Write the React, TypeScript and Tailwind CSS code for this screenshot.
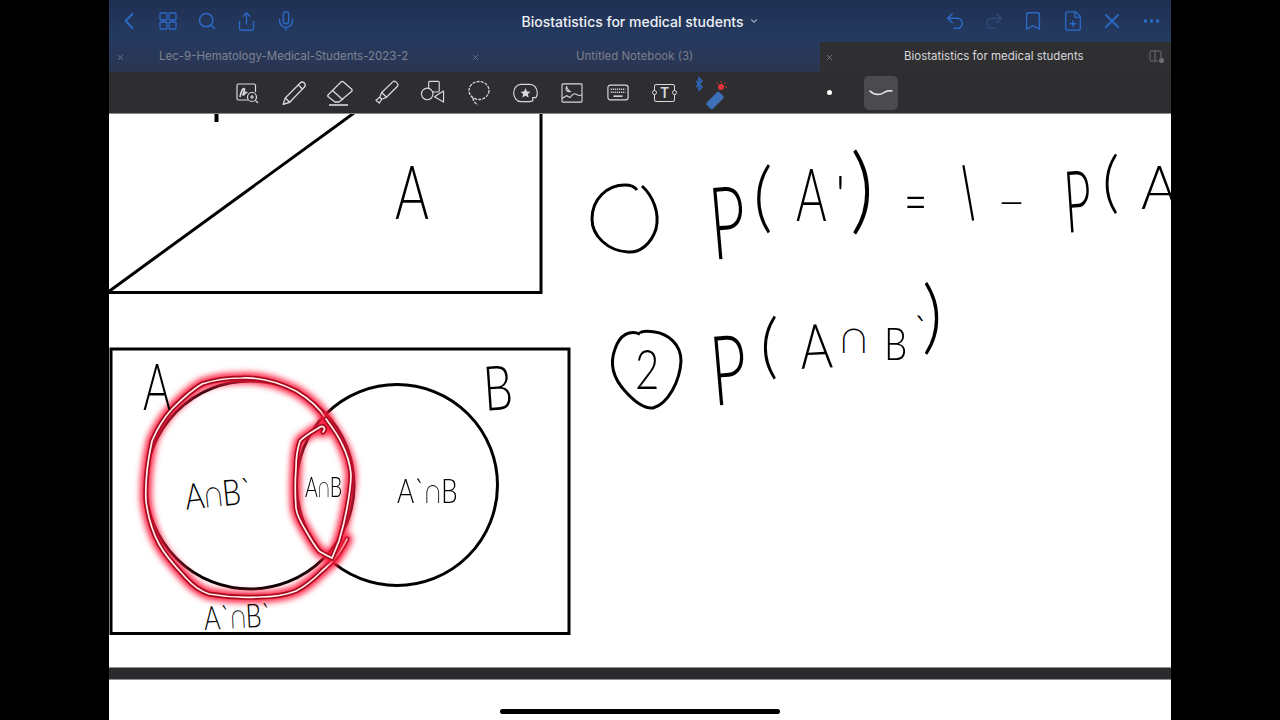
import React from "react";
import { ChevronDown, ChevronLeft, Search, Share, Mic, Undo2, Redo2, Bookmark, FilePlus, X, Keyboard } from "lucide-react";

const ink = "absolute origin-top-left leading-none whitespace-nowrap text-black font-light font-['Lato','DejaVu_Sans',sans-serif]";
const tool = "flex w-[46.4px] items-center justify-center text-[#d9d9dc]";
const navBtn = "flex w-[39.3px] items-center justify-center text-[#2c69c6]";

const outline =
  "M326 418 C318 404 306 396 296 390 C280 382 262 376 242 377 C226 377 214 379 202 383 C190 390 182 398 172 408 C163 418 157 428 152 440 C148 458 145 480 146 500 C148 516 152 530 159 543 C166 556 176 566 186 577 C194 586 200 590 209 593 C226 596 242 597 259 596 C272 596 286 594 296 590 C306 585 314 578 322 570 C330 563 338 556 347 538";
const lens =
  "M326 418 C332 426 338 434 342 443 C347 453 350 463 351 473 C351 485 349 496 347 507 C345 518 342 530 339 540 L332 557 C326 554 322 552 319 550 C314 544 310 537 306 530 C301 522 297 515 296 507 C295 494 295 480 296 467 C296 458 297 449 300 440 C306 434 314 430 320 426 C324 424 326 428 323 431";

const Highlight = ({ d }: { d: string }) => (
  <>
    <path d={d} fill="none" stroke="#ff1a3c" strokeWidth="11" strokeLinecap="round" className="blur-[3px]" />
    <path d={d} fill="none" stroke="#a80a20" strokeWidth="5" strokeLinecap="round" />
    <path d={d} fill="none" stroke="#fff1ee" strokeWidth="1.7" strokeLinecap="round" />
  </>
);

const Drawing = () => (
  <svg viewBox="109 113 1062 554" className="absolute inset-0 h-[554px] w-[1062px]">
    <g fill="none" stroke="#000" strokeWidth="3">
      <path d="M541 112 V291.5 H108" />
      <path d="M108 291 L354 112" />
      <path d="M216.500 112 V121" strokeWidth="4" />
      <rect x="111" y="348" width="458" height="284.500" />
      <circle cx="397" cy="484" r="100.500" />
      <circle cx="250" cy="484" r="104" />
      <path d="M642 185 C653 195 660 212 656 228 C651 243 640 252 628 251 C608 250 592 235 592 218 C592 198 607 184 625 184 C631 184 635 186 637 189" />
      <path d="M640 333 C630 329 620 333 615 348 C609 364 614 378 625 390 C633 399 643 408 653 407 C668 403 680 380 681 360 C681 343 668 333 655 331 C648 330 642 330 640 332" />
    </g>
    <Highlight d={outline} />
    <Highlight d={lens} />
  </svg>
);

const Writing = () => (
  <>
    <span className={`${ink} left-[286px] top-[40px] scale-x-[0.7] text-[74px]`}>A</span>

    <span className={`${ink} left-[596px] top-[57px] -rotate-[5deg] scale-x-[0.62] text-[101px]`}>P</span>
    <span className={`${ink} left-[644px] top-[42px] text-[76px]`}>(</span>
    <span className={`${ink} left-[687px] top-[43px] scale-x-[0.65] text-[72px]`}>A</span>
    <span className={`${ink} left-[726px] top-[53px] text-[55px]`}>'</span>
    <span className={`${ink} left-[741px] top-[25px] text-[94px]`}>)</span>
    <span className={`${ink} left-[795px] top-[55px] scale-y-[1.5] text-[40px]`}>=</span>
    <span className={`${ink} left-[846px] top-[45px] -rotate-[10deg] text-[60px]`}>|</span>
    <span className={`${ink} left-[888px] top-[59px] text-[50px]`}>–</span>
    <span className={`${ink} left-[952px] top-[43px] -rotate-[4deg] scale-x-[0.55] text-[86px]`}>P</span>
    <span className={`${ink} left-[993px] top-[32px] text-[67px]`}>(</span>
    <span className={`${ink} left-[1032px] top-[40px] scale-x-[0.9] text-[62px]`}>A</span>

    <span className={`${ink} left-[526px] top-[226px] scale-x-[0.75] text-[56px]`}>2</span>
    <span className={`${ink} left-[597px] top-[206px] -rotate-[5deg] scale-x-[0.65] text-[97px]`}>P</span>
    <span className={`${ink} left-[651px] top-[193px] text-[71px]`}>(</span>
    <span className={`${ink} left-[689px] top-[200px] -rotate-[3deg] scale-x-[0.8] text-[62px]`}>A</span>
    <span className={`${ink} left-[731px] top-[200px] text-[45px]`}>∩</span>
    <span className={`${ink} left-[775px] top-[206px] scale-x-[0.8] text-[46px]`}>B</span>
    <span className={`${ink} left-[804px] top-[195px] text-[40px]`}>`</span>
    <span className={`${ink} left-[813px] top-[159px] text-[80px]`}>)</span>

    <span className={`${ink} left-[34px] top-[239px] scale-x-[0.66] text-[65px]`}>A</span>
    <span className={`${ink} left-[372px] top-[242px] -rotate-[4deg] scale-x-[0.75] text-[62px]`}>B</span>
    <span className={`${ink} left-[74px] top-[364px] -rotate-[6deg] scale-x-[0.82] text-[36px]`}>A∩B`</span>
    <span className={`${ink} left-[196px] top-[358px] scale-x-[0.7] text-[28px]`}>A∩B</span>
    <span className={`${ink} left-[288px] top-[360px] scale-x-[0.8] text-[33px]`}>A`∩B</span>
    <span className={`${ink} left-[94px] top-[487px] -rotate-[3deg] scale-x-[0.76] text-[33px]`}>A`∩B`</span>
  </>
);

const Toolbar = () => (
  <div className="flex h-[41px] items-center bg-[#2e2e31] pl-[115px]">
    {/* zoom window */}
    <div className={tool}>
      <svg viewBox="0 0 24 22" className="h-[22px] w-[24px]" fill="none" stroke="currentColor" strokeWidth="1.2">
        <path d="M13 18 H3.500 a1.500 1.500 0 0 1-1.500-1.500 V3.500 A1.500 1.500 0 0 1 3.500 2 H19 a1.500 1.500 0 0 1 1.500 1.500 V10" />
        <path d="M5 15 C6 10 8 5 9.500 7 C10 9 7 13 8.500 13 C10 12 11 9 12 11" strokeWidth="1.700" />
        <circle cx="17" cy="15" r="4.500" />
        <path d="M20.500 18.500 L23 21 M15 15 h4 M17 13 v4" />
      </svg>
    </div>
    {/* pencil */}
    <div className={tool}>
      <svg viewBox="0 0 24 24" className="h-[26px] w-[26px]" fill="none" stroke="currentColor" strokeWidth="1.300" strokeLinejoin="round">
        <path d="M2 22.500 L4 16.500 L17.500 3 C18.800 1.700 20.300 1.700 21.500 2.800 C22.700 4 22.700 5.500 21.300 6.800 L8 20.500 Z" />
        <path d="M4 16.500 L8 20.500 M16 4.500 L20 8.500" />
      </svg>
    </div>
    {/* eraser */}
    <div className={tool}>
      <svg viewBox="0 0 28 26" className="h-[26px] w-[28px]" fill="none" stroke="currentColor" strokeWidth="1.300" strokeLinejoin="round">
        <path d="M2 15 L15 2 C15.800 1.200 16.800 1.200 17.500 2 L25.500 9 C26.300 9.800 26.300 10.800 25.500 11.500 L13 22 H9 L2.500 17 C1.700 16.400 1.500 15.600 2 15 Z" />
        <path d="M6.500 10.500 L17 20" />
        <path d="M3 25 H22" strokeWidth="1.600" />
      </svg>
    </div>
    {/* highlighter */}
    <div className={tool}>
      <svg viewBox="0 0 26 26" className="h-[25px] w-[25px]" fill="none" stroke="currentColor" strokeWidth="1.300" strokeLinejoin="round">
        <path d="M8 13 L19.500 2 C20.500 1 21.700 1 22.700 2 L24.200 3.500 C25.200 4.500 25.200 5.700 24.200 6.700 L13 18 Z" />
        <path d="M8 13 L6 18 L8 20 L13 18 M6 18 L2 21 L5.500 24 L8 20" />
      </svg>
    </div>
    {/* shapes */}
    <div className={tool}>
      <svg viewBox="0 0 26 26" className="h-[25px] w-[25px]" fill="none" stroke="currentColor" strokeWidth="1.200" strokeLinejoin="round">
        <rect x="9" y="1.500" width="11" height="11" rx="1" />
        <circle cx="7.500" cy="14.500" r="6" fill="#2e2e31" />
        <path d="M24.500 11.500 V23 L15 17.500 Z" fill="#2e2e31" />
      </svg>
    </div>
    {/* lasso */}
    <div className={tool}>
      <svg viewBox="0 0 24 26" className="h-[26px] w-[24px]" fill="none" stroke="currentColor" strokeWidth="1.300">
        <ellipse cx="12" cy="10.500" rx="10" ry="9" strokeDasharray="3 1.200" />
        <path d="M6 18 C6 21 8 23 11 25" strokeDasharray="3 1.200" />
      </svg>
    </div>
    {/* stickers */}
    <div className={tool}>
      <svg viewBox="0 0 28 22" className="h-[20px] w-[27px]" fill="none" stroke="currentColor" strokeWidth="1.300">
        <path d="M18 20.500 H9 C4.500 20.500 1 16 1 11 C1 6 4.500 1.500 9 1.500 H19 C23.500 1.500 27 6 27 11 C27 13 26.500 14.500 25.500 16 L22 16 L22 19.500 C21 20.200 19.500 20.500 18 20.500 Z" />
        <path d="M14 5.500 L15.700 9.300 L19.500 9.700 L16.600 12.200 L17.500 16 L14 14 L10.500 16 L11.400 12.200 L8.500 9.700 L12.300 9.300 Z" fill="currentColor" stroke="none" />
      </svg>
    </div>
    {/* image */}
    <div className={tool}>
      <svg viewBox="0 0 24 22" className="h-[20px] w-[22px]" fill="none" stroke="currentColor" strokeWidth="1.200">
        <rect x="1" y="1" width="22" height="20" rx="1" />
        <path d="M6 4 C4.500 7 6 10 10 9.500 C8 8.500 7 7 6 4 Z" />
        <path d="M1 17 L6 14 L10 16 C12 13 14 11 16 12 C18 13 20 15 23 13" />
      </svg>
    </div>
    {/* keyboard */}
    <div className={tool}>
      <svg viewBox="0 0 24 18" className="h-[17px] w-[22px]" fill="none" stroke="currentColor" strokeWidth="1.300">
        <rect x="1" y="1" width="22" height="16" rx="2.500" />
        <path d="M4 5.500 H20 M4 8.800 H20" strokeWidth="1.700" strokeDasharray="1.300 0.900" />
        <path d="M7 13 H17" strokeWidth="1.700" />
      </svg>
    </div>
    {/* text box */}
    <div className={tool}>
      <div className="relative flex h-[18px] w-[21px] items-center justify-center rounded-[2px] border border-[#d9d9dc] font-['Inter',sans-serif] text-[14px] leading-none font-semibold">
        T
        <span className="absolute -left-[3px] top-[5px] h-[5px] w-[5px] rounded-full border border-[#d9d9dc] bg-[#2e2e31]" />
        <span className="absolute -right-[3px] top-[5px] h-[5px] w-[5px] rounded-full border border-[#d9d9dc] bg-[#2e2e31]" />
      </div>
    </div>
    {/* laser pointer */}
    <div className={tool}>
      <svg viewBox="0 0 34 34" className="h-[34px] w-[34px]" fill="none">
        <path d="M2 5 L8 11 L5 14 V2 L8 5 L2 11" stroke="#2c69c6" strokeWidth="1.500" />
        <rect x="12" y="20" width="18" height="9" rx="2.500" transform="rotate(-45 21 24.500)" fill="#3d6fb8" />
        <circle cx="27" cy="11" r="3" fill="#e8323c" />
        <path d="M27 5 V7 M33 11 H31 M31.500 6.500 L30 8 M22.500 6.500 L24 8" stroke="#e8323c" strokeWidth="1" />
      </svg>
    </div>
    <span className="ml-[93px] h-[5px] w-[5px] rounded-full bg-white" />
    <div className="ml-[32px] flex h-[34px] w-[34px] items-center justify-center rounded-[5px] bg-[#4a4a4f]">
      <svg viewBox="0 0 24 10" className="h-[10px] w-[24px]" fill="none">
        <path d="M1 3 C6 8 12 7 16 4 C18 3 20 2.500 23 3" stroke="#eeeeee" strokeWidth="1.500" strokeLinecap="round" />
      </svg>
    </div>
  </div>
);

const App = () => {
  return (
    <div className="flex h-[720px] w-[1280px] justify-center overflow-hidden bg-black font-['Inter',sans-serif]">
      <main className="flex w-[1062px] flex-col">
        <div className="bg-gradient-to-b from-[#1f3052] via-[#253a60] to-[#2b3552]">
          <nav className="grid h-[42px] grid-cols-[1fr_auto_1fr] items-center">
            <div className="flex pl-[-2px]">
              <div className={navBtn}><ChevronLeft size={28} strokeWidth={1.700} /></div>
              <div className={navBtn}>
                <svg viewBox="0 0 18 18" className="h-[18px] w-[18px]" fill="none" stroke="currentColor" strokeWidth="1.300">
                  <rect x="1" y="1" width="7" height="7" rx="1" />
                  <rect x="10" y="1" width="7" height="7" rx="1" />
                  <rect x="1" y="10" width="7" height="7" rx="1" />
                  <rect x="10" y="10" width="7" height="7" rx="1" />
                </svg>
              </div>
              <div className={navBtn}><Search size={20} strokeWidth={1.800} /></div>
              <div className={navBtn}><Share size={21} strokeWidth={1.500} /></div>
              <div className={navBtn}><Mic size={22} strokeWidth={1.500} /></div>
            </div>
            <div className="flex items-center gap-[5px] text-[14px] font-medium text-[#eef0f4]">
              Biostatistics for medical students
              <ChevronDown size={10} strokeWidth={2.500} className="text-[#c8ccd6]" />
            </div>
            <div className="flex justify-end pr-[0px]">
              <div className={navBtn}><Undo2 size={22} strokeWidth={1.600} /></div>
              <div className={`${navBtn} !text-[#2d4a78]`}><Redo2 size={22} strokeWidth={1.600} /></div>
              <div className={navBtn}><Bookmark size={22} strokeWidth={1.500} /></div>
              <div className={navBtn}><FilePlus size={22} strokeWidth={1.500} /></div>
              <div className={navBtn}><X size={24} strokeWidth={1.800} /></div>
              <div className="flex w-[39.3px] items-center justify-center gap-[2.500px]">
                <span className="h-[3.500px] w-[3.500px] rounded-full bg-[#2c69c6]" />
                <span className="h-[3.500px] w-[3.500px] rounded-full bg-[#2c69c6]" />
                <span className="h-[3.500px] w-[3.500px] rounded-full bg-[#2c69c6]" />
              </div>
            </div>
          </nav>
          <div className="grid h-[30px] grid-cols-[357px_354px_351px] items-center text-[11.500px]">
            <div className="flex items-center pl-[7px] text-[#7d8494]">
              <X size={9} strokeWidth={2} />
              <span className="ml-[34px]">Lec-9-Hematology-Medical-Students-2023-2</span>
            </div>
            <div className="flex items-center pl-[5px] text-[#7a7f8d]">
              <X size={9} strokeWidth={2} />
              <span className="ml-[96px]">Untitled Notebook (3)</span>
            </div>
            <div className="flex h-full items-center bg-[#2f2f32] pl-[5px] pr-[6px] text-[#d8d8da]">
              <X size={9} strokeWidth={2} className="text-[#85858a]" />
              <span className="ml-[70px] flex-1">Biostatistics for medical students</span>
              <svg viewBox="0 0 16 14" className="h-[14px] w-[16px] text-[#6e6e72]" fill="none" stroke="currentColor" strokeWidth="1">
                <path d="M12 8 V2 a1 1 0 0 0-1-1 H2 a1 1 0 0 0-1 1 V10 a1 1 0 0 0 1 1 H9 M6 1 V11" />
                <circle cx="12.500" cy="10.500" r="2.500" fill="currentColor" stroke="none" />
              </svg>
            </div>
          </div>
        </div>
        <Toolbar />
        <div className="relative h-[554px] overflow-hidden border-t border-[#8a8a8a] bg-white">
          <Drawing />
          <Writing />
        </div>
        <div className="h-[13px] border-y border-[#8f8f92] bg-[#2b2b2e]" />
        <div className="flex h-[40px] justify-center bg-white pt-[29px]">
          <span className="h-[4.500px] w-[280px] rounded-full bg-black" />
        </div>
      </main>
    </div>
  );
};

export default App;
